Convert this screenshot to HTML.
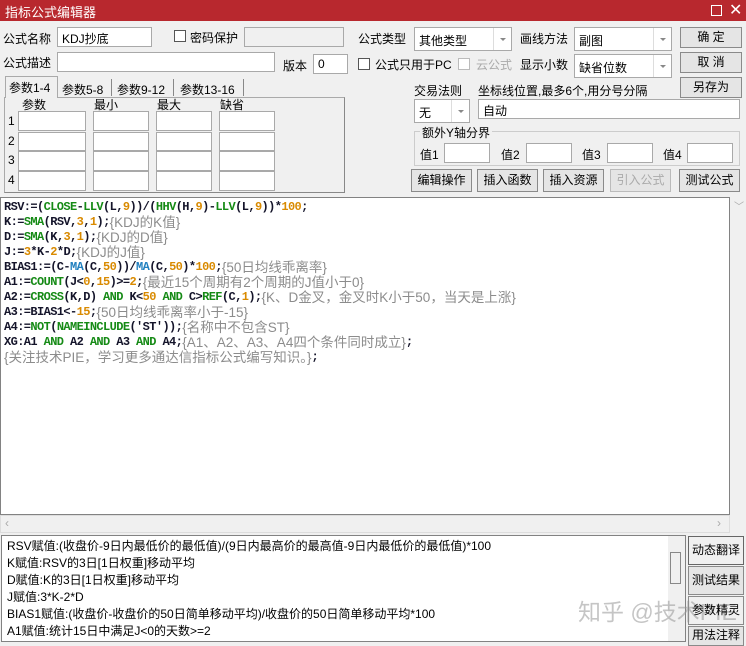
<!DOCTYPE html>
<html><head><meta charset="utf-8"><style>
*{box-sizing:border-box;margin:0;padding:0}
body{width:746px;height:643px;background:#f0f0f0;position:relative;overflow:hidden;font-family:"Liberation Sans","Noto Sans CJK SC",sans-serif;font-size:12px;color:#000}
.a{position:absolute;white-space:nowrap}
.in{position:absolute;background:#fff;border:1px solid #a9a9a9}
.cb{position:absolute;width:12px;height:12px;background:#fff;border:1px solid #555}
.btn{position:absolute;background:#e5e5e5;border:1px solid #8a8a8a;text-align:center;font-size:12px}
.cmb{position:absolute;background:#fff;border:1px solid #a9a9a9}
.cmb .ar{position:absolute;right:0;top:0;bottom:0;width:18px;border-left:1px solid #ddd}
.cmb .ar:after{content:"";position:absolute;left:6px;top:45%;border:3px solid transparent;border-top:3px solid #888}
#code{position:absolute;left:0;top:197px;width:730px;height:318px;background:#fff;border:1px solid #828282;font-family:"Liberation Mono","Noto Sans CJK SC",monospace;font-weight:bold;font-size:12px;line-height:15px;padding:2px 0 0 3px;color:#14142a}
#code div{white-space:pre;letter-spacing:-0.6px;height:15px;line-height:15px;overflow:visible}
#code div span{vertical-align:top;line-height:15px}
.g{color:#158a15}.o{color:#d98a00}.c{color:#8c8c8c;font-weight:normal;font-family:"Liberation Sans","Noto Sans CJK SC",sans-serif;font-size:13.5px;letter-spacing:0}.b{color:#1f7fbf}
.bl div{height:17px;line-height:17px}
</style></head><body>
<div class="a" style="left:0;top:0;width:746px;height:21px;background:#b8282e"></div>
<div class="a" style="left:5px;top:2px;color:#fff;font-size:13px">指标公式编辑器</div>
<div class="a" style="left:711px;top:5px;width:11px;height:11px;border:1px solid #fff"></div>
<div class="a" style="left:729px;top:0px;color:#fff;font-size:16px">✕</div>

<div class="a" style="left:3px;top:30px">公式名称</div>
<div class="in" style="left:57px;top:27px;width:95px;height:20px;padding:2px 4px">KDJ抄底</div>
<div class="cb" style="left:174px;top:30px"></div>
<div class="a" style="left:190px;top:29px">密码保护</div>
<div class="in" style="left:244px;top:27px;width:100px;height:20px;background:#f0f0f0"></div>
<div class="a" style="left:3px;top:54px">公式描述</div>
<div class="in" style="left:57px;top:52px;width:218px;height:20px"></div>
<div class="a" style="left:283px;top:57px">版本</div>
<div class="in" style="left:313px;top:54px;width:35px;height:20px;padding:2px 4px">0</div>
<div class="cb" style="left:358px;top:58px"></div>

<div class="a" style="left:358px;top:30px">公式类型</div>
<div class="cmb" style="left:414px;top:27px;width:98px;height:24px"><span class="a" style="left:4px;top:4px">其他类型</span><div class="ar"></div></div>
<div class="a" style="left:520px;top:30px">画线方法</div>
<div class="cmb" style="left:574px;top:27px;width:98px;height:24px"><span class="a" style="left:4px;top:4px">副图</span><div class="ar"></div></div>
<div class="btn" style="left:680px;top:27px;width:62px;height:21px;line-height:19px">确 定</div>
<div class="a" style="left:375px;top:56px">公式只用于PC</div>
<div class="cb" style="left:458px;top:58px;border-color:#bbb"></div>
<div class="a" style="left:476px;top:56px;color:#aaa">云公式</div>
<div class="a" style="left:520px;top:56px">显示小数</div>
<div class="cmb" style="left:574px;top:54px;width:98px;height:24px"><span class="a" style="left:4px;top:4px">缺省位数</span><div class="ar"></div></div>
<div class="btn" style="left:680px;top:52px;width:62px;height:21px;line-height:19px">取 消</div>
<div class="btn" style="left:680px;top:77px;width:62px;height:21px;line-height:19px">另存为</div>
<div class="a" style="left:414px;top:82px">交易法则</div>
<div class="a" style="left:478px;top:82px">坐标线位置,最多6个,用分号分隔</div>
<div class="cmb" style="left:414px;top:99px;width:56px;height:24px"><span class="a" style="left:4px;top:4px">无</span><div class="ar"></div></div>
<div class="in" style="left:478px;top:99px;width:262px;height:20px;padding:2px 4px">自动</div>
<div class="a" style="left:414px;top:131px;width:326px;height:35px;border:1px solid #ccc"></div>
<div class="a" style="left:420px;top:124px;background:#f0f0f0;padding:0 2px">额外Y轴分界</div>
<div class="a" style="left:420px;top:146px">值1</div><div class="in" style="left:444px;top:143px;width:46px;height:20px"></div>
<div class="a" style="left:501px;top:146px">值2</div><div class="in" style="left:526px;top:143px;width:46px;height:20px"></div>
<div class="a" style="left:582px;top:146px">值3</div><div class="in" style="left:607px;top:143px;width:46px;height:20px"></div>
<div class="a" style="left:663px;top:146px">值4</div><div class="in" style="left:687px;top:143px;width:46px;height:20px"></div>
<div class="btn" style="left:411px;top:169px;width:61px;height:23px;line-height:21px">编辑操作</div>
<div class="btn" style="left:477px;top:169px;width:61px;height:23px;line-height:21px">插入函数</div>
<div class="btn" style="left:543px;top:169px;width:61px;height:23px;line-height:21px">插入资源</div>
<div class="btn" style="left:610px;top:169px;width:61px;height:23px;line-height:21px;color:#aaa;border-color:#bbb">引入公式</div>
<div class="btn" style="left:679px;top:169px;width:61px;height:23px;line-height:21px">测试公式</div>

<div class="a" style="left:4px;top:97px;width:341px;height:96px;border:1px solid #aaa;border-right-color:#888;border-bottom-color:#888"></div>
<div class="a" style="left:5px;top:76px;width:53px;height:22px;background:#f0f0f0;border:1px solid #aaa;border-bottom:none"></div>
<div class="a" style="left:9px;top:79px">参数1-4</div>
<div class="a" style="left:62px;top:81px">参数5-8</div>
<div class="a" style="left:117px;top:81px">参数9-12</div>
<div class="a" style="left:180px;top:81px">参数13-16</div>
<div class="a" style="left:111px;top:79px;width:1px;height:17px;background:#888"></div>
<div class="a" style="left:173px;top:79px;width:1px;height:17px;background:#888"></div>
<div class="a" style="left:243px;top:79px;width:1px;height:17px;background:#888"></div>
<div class="a" style="left:22px;top:96px">参数</div><div class="a" style="left:94px;top:96px">最小</div><div class="a" style="left:157px;top:96px">最大</div><div class="a" style="left:220px;top:96px">缺省</div>
<div class="a" style="left:8px;top:114px">1</div><div class="a" style="left:8px;top:134px">2</div><div class="a" style="left:8px;top:153px">3</div><div class="a" style="left:8px;top:173px">4</div>
<div class="in" style="left:18px;top:111px;width:68px;height:20px"></div><div class="in" style="left:93px;top:111px;width:56px;height:20px"></div><div class="in" style="left:156px;top:111px;width:56px;height:20px"></div><div class="in" style="left:219px;top:111px;width:56px;height:20px"></div>
<div class="in" style="left:18px;top:132px;width:68px;height:19px"></div><div class="in" style="left:93px;top:132px;width:56px;height:19px"></div><div class="in" style="left:156px;top:132px;width:56px;height:19px"></div><div class="in" style="left:219px;top:132px;width:56px;height:19px"></div>
<div class="in" style="left:18px;top:151px;width:68px;height:20px"></div><div class="in" style="left:93px;top:151px;width:56px;height:20px"></div><div class="in" style="left:156px;top:151px;width:56px;height:20px"></div><div class="in" style="left:219px;top:151px;width:56px;height:20px"></div>
<div class="in" style="left:18px;top:171px;width:68px;height:20px"></div><div class="in" style="left:93px;top:171px;width:56px;height:20px"></div><div class="in" style="left:156px;top:171px;width:56px;height:20px"></div><div class="in" style="left:219px;top:171px;width:56px;height:20px"></div>

<div id="code">
<div>RSV:=(<span class="g">CLOSE</span>-<span class="g">LLV</span>(L,<span class="o">9</span>))/(<span class="g">HHV</span>(H,<span class="o">9</span>)-<span class="g">LLV</span>(L,<span class="o">9</span>))*<span class="o">100</span>;</div>
<div>K:=<span class="g">SMA</span>(RSV,<span class="o">3</span>,<span class="o">1</span>);<span class="c">{KDJ的K值}</span></div>
<div>D:=<span class="g">SMA</span>(K,<span class="o">3</span>,<span class="o">1</span>);<span class="c">{KDJ的D值}</span></div>
<div>J:=<span class="o">3</span>*K-<span class="o">2</span>*D;<span class="c">{KDJ的J值}</span></div>
<div>BIAS1:=(C-<span class="b">MA</span>(C,<span class="o">50</span>))/<span class="b">MA</span>(C,<span class="o">50</span>)*<span class="o">100</span>;<span class="c">{50日均线乖离率}</span></div>
<div>A1:=<span class="g">COUNT</span>(J&lt;<span class="o">0</span>,<span class="o">15</span>)&gt;=<span class="o">2</span>;<span class="c">{最近15个周期有2个周期的J值小于0}</span></div>
<div>A2:=<span class="g">CROSS</span>(K,D) <span class="g">AND</span> K&lt;<span class="o">50</span> <span class="g">AND</span> C&gt;<span class="g">REF</span>(C,<span class="o">1</span>);<span class="c">{K、D金叉，金叉时K小于50，当天是上涨}</span></div>
<div>A3:=BIAS1&lt;-<span class="o">15</span>;<span class="c">{50日均线乖离率小于-15}</span></div>
<div>A4:=<span class="g">NOT</span>(<span class="g">NAMEINCLUDE</span>('ST'));<span class="c">{名称中不包含ST}</span></div>
<div>XG:A1 <span class="g">AND</span> A2 <span class="g">AND</span> A3 <span class="g">AND</span> A4;<span class="c">{A1、A2、A3、A4四个条件同时成立}</span>;</div>
<div><span class="c">{关注技术PIE，学习更多通达信指标公式编写知识。}</span>;</div>
</div>
<div class="a" style="left:730px;top:197px;width:16px;height:318px;background:#f0f0f0"></div>
<div class="a" style="left:734px;top:198px;color:#aaa;font-size:10px">﹀</div>
<div class="a" style="left:0;top:515px;width:730px;height:18px;background:#f0f0f0;border:1px solid #ddd"></div>
<div class="a" style="left:5px;top:516px;color:#aaa;font-size:12px">‹</div>
<div class="a" style="left:717px;top:516px;color:#aaa;font-size:12px">›</div>

<div class="a bl" style="left:1px;top:535px;width:685px;height:107px;background:#fff;border:1px solid #828282;padding:2px 0 0 5px;font-size:12px">
<div>RSV赋值:(收盘价-9日内最低价的最低值)/(9日内最高价的最高值-9日内最低价的最低值)*100</div>
<div>K赋值:RSV的3日[1日权重]移动平均</div>
<div>D赋值:K的3日[1日权重]移动平均</div>
<div>J赋值:3*K-2*D</div>
<div>BIAS1赋值:(收盘价-收盘价的50日简单移动平均)/收盘价的50日简单移动平均*100</div>
<div>A1赋值:统计15日中满足J&lt;0的天数&gt;=2</div>
</div>
<div class="a" style="left:668px;top:536px;width:17px;height:105px;background:#f0f0f0"></div>
<div class="a" style="left:670px;top:552px;width:11px;height:32px;border:1px solid #888;background:#f0f0f0"></div>
<div class="a" style="left:578px;top:593px;font-size:23px;color:rgba(150,150,150,0.55)">知乎 @技术PIE</div>
<div class="btn" style="left:688px;top:536px;width:56px;height:29px;line-height:27px;background:#f0f0f0;border-color:#666">动态翻译</div>
<div class="btn" style="left:688px;top:566px;width:56px;height:29px;line-height:27px">测试结果</div>
<div class="btn" style="left:688px;top:596px;width:56px;height:29px;line-height:27px;background:transparent">参数精灵</div>
<div class="btn" style="left:688px;top:626px;width:56px;height:20px;line-height:17px">用法注释</div>
</body></html>
